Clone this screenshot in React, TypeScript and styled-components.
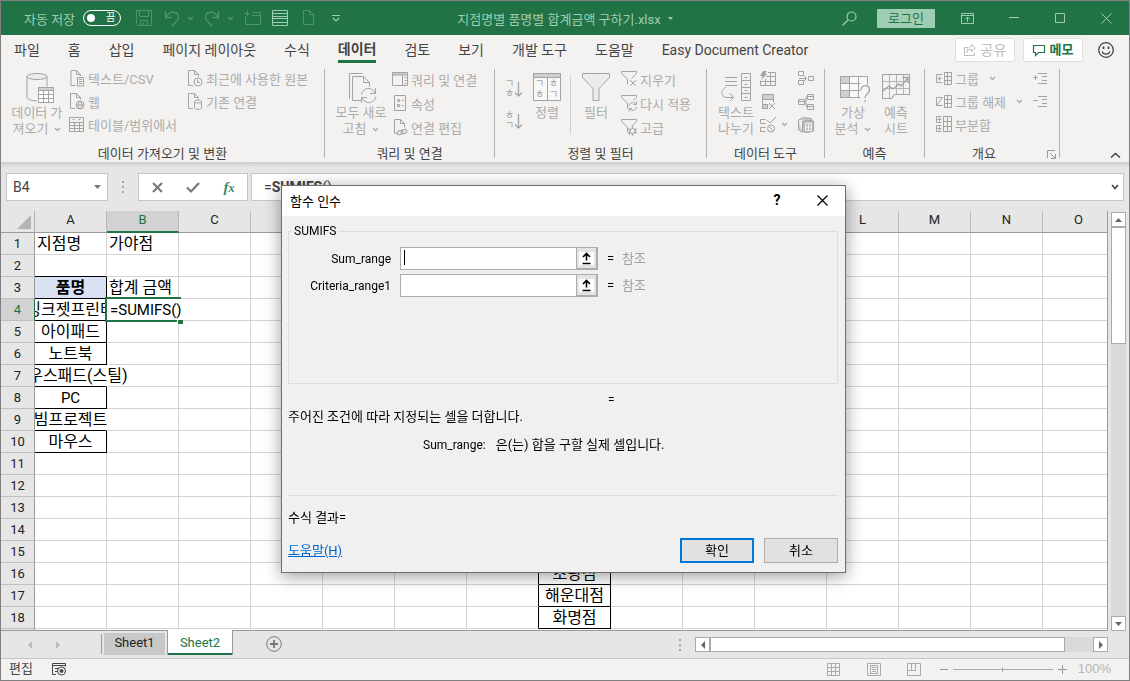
import React from 'react';
import styled, { createGlobalStyle, css } from 'styled-components';

const GREEN = '#217346';
const MINT = '#9fcdb3';
const DIM = '#4f9470';
const GREY = '#a3a3a3';

const GlobalStyle = createGlobalStyle`
  *, *::before, *::after { box-sizing: border-box; }
  body { margin: 0; }
  body, button, input {
    font-family: Roboto, 'Noto Sans CJK KR', sans-serif;
    font-size: 13px;
  }
  button { margin: 0; padding: 0; border: 0; background: none; color: inherit; }
`;

/* ---------- shared ---------- */

const Svg = styled.svg`
  display: block;
  flex: none;
  overflow: visible;
  fill: none;
  stroke: currentColor;
  stroke-width: 1;
`;

type IcoProps = { w: number; h: number; x?: number; children: React.ReactNode };
const Ico = ({ w, h, x = 0, children }: IcoProps) => (
  <Svg width={w} height={h} viewBox={`${-x} 0 ${w} ${h}`} aria-hidden="true">
    {children}
  </Svg>
);

const Chevron = () => (
  <Ico w={7} h={5}>
    <path d="M1 1l2.5 2.5L6 1" strokeWidth="1.3" />
  </Ico>
);

const Window = styled.div`
  position: relative;
  display: flex;
  flex-direction: column;
  height: 100vh;
  overflow: hidden;
  border: 1px solid #808080;
  background: #e6e6e6;
  color: #444;
`;

/* ---------- title bar ---------- */

const TitleBar = styled.header`
  display: grid;
  grid-template-columns: 1fr auto 1fr;
  align-items: center;
  flex: none;
  height: 34px;
  background: ${GREEN};
  color: ${MINT};
`;

const QuickAccess = styled.div`
  display: flex;
  align-items: center;
  gap: 4px;
  padding-left: 23px;
`;

const AutoSave = styled.label`
  display: flex;
  align-items: center;
  gap: 8px;
  margin-right: 7px;
  white-space: nowrap;
`;

const Toggle = styled.span`
  display: flex;
  align-items: center;
  justify-content: space-between;
  width: 38px;
  height: 16px;
  padding: 0 5px 0 3px;
  border: 1px solid #fff;
  border-radius: 8px;
  color: #fff;
  font-size: 10px;
  line-height: 14px;

  &::before {
    content: '';
    width: 8px;
    height: 8px;
    border-radius: 50%;
    background: #fff;
  }
`;

const ToggleInput = styled.input`
  position: absolute;
  opacity: 0;
  pointer-events: none;
`;

const Split = styled.div`
  display: flex;
`;

const QuickButton = styled.button<{ $narrow?: boolean; $lit?: boolean }>`
  display: flex;
  align-items: center;
  justify-content: center;
  width: ${p => (p.$narrow ? 12 : 24)}px;
  height: 24px;
  color: ${p => (p.$lit ? MINT : DIM)};
`;

const FileName = styled.button`
  display: flex;
  align-items: center;
  gap: 7px;
  color: ${MINT};
`;

const TitleRight = styled.div`
  display: flex;
  align-items: center;
  justify-content: flex-end;
`;

const Login = styled.button`
  width: 58px;
  height: 19px;
  margin: 0 10px 0 16px;
  border-radius: 1px;
  background: ${MINT};
  color: ${GREEN};
  line-height: 17px;
`;

const CaptionButton = styled.button`
  display: flex;
  align-items: center;
  justify-content: center;
  width: 46px;
  height: 34px;
`;

/* ---------- ribbon tabs ---------- */

const TabRow = styled.nav`
  display: flex;
  align-items: center;
  flex: none;
  height: 30px;
  padding: 0 15px 0 13px;
  background: #f3f2f1;
`;

const TabList = styled.div`
  display: flex;
  flex: 1;
  gap: 28px;
`;

const Tab = styled.button<{ $active?: boolean }>`
  height: 30px;
  padding-top: 1px;
  color: #444;
  font-size: 14px;
  line-height: 26px;
  white-space: nowrap;
  border-bottom: 2px solid #f3f2f1;
  ${p =>
    p.$active &&
    css`
      height: 26px;
      margin-top: 2px;
      line-height: 22px;
      border-bottom: 3px solid ${GREEN};
      font-weight: 700;
    `}
`;

const PillButton = styled.button<{ $strong?: boolean }>`
  display: flex;
  align-items: center;
  justify-content: center;
  gap: 5px;
  width: 60px;
  height: 24px;
  margin-right: 8px;
  border: 1px solid #e1dfdd;
  border-radius: 2px;
  background: #fff;
  color: ${p => (p.$strong ? GREEN : '#bdbdbd')};
  font-size: ${p => (p.$strong ? 13 : 14)}px;
  font-weight: ${p => (p.$strong ? 700 : 400)};
  line-height: 20px;
`;

const SmileButton = styled.button`
  margin-left: 7px;
  color: #444;
`;

/* ---------- ribbon ---------- */

const Ribbon = styled.section`
  display: flex;
  flex: none;
  height: 97px;
  background: #f3f2f1;
  color: #ababab;
`;

const Group = styled.div<{ $w: number }>`
  display: flex;
  flex-direction: column;
  flex: none;
  width: ${p => p.$w}px;
`;

const GroupBody = styled.div<{ $pad: number; $gap?: number }>`
  display: flex;
  align-items: flex-start;
  flex: 1;
  gap: ${p => p.$gap ?? 8}px;
  padding-left: ${p => p.$pad}px;
`;

const GroupFooter = styled.div`
  display: flex;
  align-items: center;
  justify-content: center;
  height: 18px;
  padding-top: 2px;
  color: #444;
  line-height: 16px;
`;

const Launcher = styled.button`
  margin-right: 3px;
  color: #999;
`;

const FooterLabel = styled.span`
  flex: 1;
  padding-right: 4px;
  text-align: center;
`;

const Divider = styled.div<{ $light?: boolean }>`
  flex: none;
  width: 1px;
  margin: ${p => (p.$light ? '10px 0' : '4px 0')};
  align-self: stretch;
  background: ${p => (p.$light ? '#d2d0ce' : '#b5b3b1')};
`;

const BigButton = styled.button<{ $w: number }>`
  display: flex;
  flex-direction: column;
  align-items: center;
  flex: none;
  width: ${p => p.$w}px;
  padding-top: 8px;
  line-height: 16px;
  white-space: nowrap;
`;

const BigIcon = styled.span`
  height: 32px;
  color: ${GREY};
`;

const BigLine = styled.span`
  display: flex;
  align-items: center;
  gap: 6px;
`;

const Stack = styled.div<{ $w?: number }>`
  display: flex;
  flex-direction: column;
  flex: none;
  width: ${p => (p.$w ? `${p.$w}px` : 'auto')};
  padding-top: 2px;
`;

const SmallButton = styled.button<{ $h?: number }>`
  display: flex;
  align-items: center;
  gap: 3px;
  height: ${p => p.$h ?? 23}px;
  white-space: nowrap;
`;

const IconSlot = styled.span`
  display: flex;
  justify-content: center;
  width: 16px;
  color: ${GREY};
`;

const ChevronSlot = styled.span<{ $tight: boolean }>`
  margin-left: ${p => (p.$tight ? 2 : 7)}px;
`;

const SortStack = styled.div`
  display: flex;
  flex-direction: column;
  gap: 14px;
  width: 18px;
  padding-top: 15px;
  color: ${GREY};
`;

const RibbonEnd = styled.div`
  display: flex;
  align-items: flex-end;
  justify-content: flex-end;
  flex: 1;
  padding: 0 8px 4px 0;
  color: #444;
`;

/* ---------- formula bar ---------- */

const FormulaBar = styled.section`
  display: flex;
  flex: none;
  height: 49px;
  padding: 11px 5px 10px;
  background: linear-gradient(#cdcdcd, #e6e6e6 6px);
`;

const Field = styled.div`
  display: flex;
  align-items: center;
  height: 28px;
  border: 1px solid #c6c6c6;
  background: #fff;
`;

const NameField = styled(Field)`
  width: 102px;
  padding-right: 6px;
`;

const NameInput = styled.input`
  flex: 1;
  min-width: 0;
  padding: 0 0 0 6px;
  border: 0;
  outline: 0;
  background: none;
  color: #444;
  font-size: 14px;
`;

const Dots = styled.span`
  display: flex;
  justify-content: center;
  align-items: center;
  width: 30px;
  color: #a6a6a6;
`;

const FxField = styled(Field)`
  width: 110px;
  margin-right: 3px;
  color: #777;
`;

const FxButton = styled.button`
  display: flex;
  align-items: center;
  justify-content: center;
  flex: 1;
`;

const Fx = styled.span`
  color: #3a8a5f;
  font: italic 700 15px 'Liberation Serif', serif;

  small { font-size: 12px; }
`;

const FormulaField = styled(Field)`
  flex: 1;
  padding: 0 4px 0 12px;
  font-size: 14px;
`;

const FormulaText = styled.div`
  flex: 1;
  outline: 0;
`;

/* ---------- worksheet ---------- */

const SheetArea = styled.main`
  display: flex;
  flex: 1;
  min-height: 0;
`;

const SheetClip = styled.div`
  flex: 1;
  min-width: 0;
  overflow: hidden;
  border-right: 1px solid #9b9b9b;
  border-bottom: 1px solid #9b9b9b;
  background: #fff;
`;

const COLS = 26;
const ROWS = 40;

const Grid = styled.table`
  table-layout: fixed;
  width: ${34 + COLS * 72}px;
  border-collapse: separate;
  border-spacing: 0;
  color: #000;
`;

const headCell = css<{ $on?: boolean }>`
  height: 22px;
  background: ${p => (p.$on ? '#d2d2d2' : '#e6e6e6')};
  color: ${p => (p.$on ? GREEN : '#222')};
  font-size: 13px;
  font-weight: 400;
  text-align: center;
  vertical-align: top;
`;

const Corner = styled.th`
  width: 34px;
  height: 22px;
  padding: 0 3px 3px 0;
  border-right: 1px solid #b1b1b1;
  border-bottom: 1px solid #9b9b9b;
  background: #e6e6e6;
  color: #b4b4b4;
  vertical-align: bottom;

  svg { margin-left: auto; }
`;

const ColHead = styled.th<{ $on?: boolean }>`
  ${headCell}
  width: 72px;
  padding: 0;
  line-height: 18px;
  border-right: 1px solid #b9b9b9;
  border-bottom: ${p => (p.$on ? `2px solid ${GREEN}` : '1px solid #9b9b9b')};
`;

const RowHead = styled.th<{ $on?: boolean }>`
  ${headCell}
  position: sticky;
  left: 0;
  z-index: 2;
  padding: 1px 0 0;
  line-height: 20px;
  border-right: ${p => (p.$on ? `1px solid ${GREEN}` : '1px solid #9b9b9b')};
  border-bottom: 1px solid #c0c0c0;
`;

type CellStyle = {
  text?: string;
  align?: 'left' | 'center';
  spill?: boolean;
  right?: boolean;
  bottom?: boolean;
  head?: boolean;
  latin?: boolean;
};

const Cell = styled.td<{ $c: CellStyle }>`
  position: relative;
  height: 22px;
  padding: 0;
  border-right: 1px solid ${p => (p.$c.right ? '#000' : p.$c.spill ? '#fff' : '#d4d4d4')};
  border-bottom: 1px solid ${p => (p.$c.bottom ? '#000' : '#d4d4d4')};
  background: ${p => (p.$c.head ? '#d9e1f2' : 'transparent')};
`;

const CellText = styled.div<{ $c: CellStyle }>`
  display: flex;
  justify-content: ${p => (p.$c.align === 'center' ? 'center' : 'flex-start')};
  height: 21px;
  padding: 0 2px;
  overflow: ${p => (p.$c.spill ? 'visible' : 'hidden')};
  font-size: ${p => (p.$c.latin ? 15 : 16)}px;
  font-weight: ${p => (p.$c.head ? 700 : 400)};
  line-height: 22px;
  white-space: nowrap;
`;

const CellEditor = styled.div`
  position: absolute;
  z-index: 1;
  top: -2px;
  left: -2px;
  width: 76px;
  height: 25px;
  padding-left: 3px;
  border: 2px solid ${GREEN};
  border-right: 0;
  background: #fff;
  font-size: 15px;
  line-height: 22px;
  white-space: nowrap;

  &::after {
    content: '';
    position: absolute;
    right: -2px;
    bottom: -4px;
    width: 6px;
    height: 5px;
    border: solid #fff;
    border-width: 1px 0 0 1px;
    background: ${GREEN};
  }
`;

const cells: Record<string, CellStyle> = {
  A1: { text: '지점명' },
  B1: { text: '가야점' },
  A2: { bottom: true },
  A3: { text: '품명', align: 'center', head: true, right: true, bottom: true },
  B3: { text: '합계 금액' },
  A4: { text: '잉크젯프린터', align: 'center', right: true, bottom: true },
  A5: { text: '아이패드', align: 'center', right: true, bottom: true },
  A6: { text: '노트북', align: 'center', right: true, bottom: true },
  A7: { text: '마우스패드(스틸)', align: 'center', spill: true, bottom: true },
  A8: { text: 'PC', align: 'center', latin: true, right: true, bottom: true },
  A9: { text: '빔프로젝트', align: 'center', spill: true, bottom: true },
  A10: { text: '마우스', align: 'center', right: true, bottom: true },
  H15: { right: true, bottom: true },
  G16: { right: true },
  H16: { text: '초량점', align: 'center', right: true, bottom: true },
  G17: { right: true },
  H17: { text: '해운대점', align: 'center', right: true, bottom: true },
  G18: { right: true },
  H18: { text: '화명점', align: 'center', right: true, bottom: true },
};

const columns = Array.from({ length: COLS }, (_, i) => String.fromCharCode(65 + i));
const rows = Array.from({ length: ROWS }, (_, i) => i + 1);

const VScroll = styled.div`
  display: flex;
  flex-direction: column;
  flex: none;
  width: 21px;
  padding: 1px 3px 0;
`;

const ScrollTrack = styled.div<{ $row?: boolean }>`
  display: flex;
  flex: 1;
  flex-direction: ${p => (p.$row ? 'row' : 'column')};
  background: #dadada;
`;

const ScrollButton = styled.button`
  display: flex;
  align-items: center;
  justify-content: center;
  flex: none;
  width: 15px;
  height: 15px;
  border: 1px solid #ababab;
  background: #fff;
  color: #666;

  svg { fill: currentColor; stroke: none; }
`;

const VThumb = styled.div`
  height: 30%;
  border: 1px solid #ababab;
  background: #fff;
`;

const HThumb = styled.div`
  width: 355px;
  border: 1px solid #ababab;
  background: #fff;
`;

/* ---------- sheet tabs and status bar ---------- */

const SheetBar = styled.footer`
  display: flex;
  flex: none;
  height: 28px;
  border-bottom: 1px solid #c6c6c6;
`;

const SheetNav = styled.div`
  display: flex;
  align-items: center;
  gap: 24px;
  width: 100px;
  padding-left: 27px;
  color: #b9b9b9;

  svg { fill: currentColor; stroke: none; }
`;

const SheetTab = styled.button<{ $active?: boolean }>`
  height: 22px;
  margin: 2px 2px 0;
  width: 61px;
  padding-bottom: 2px;
  background: #c8c8c8;
  color: #222;
  line-height: 18px;
  ${p =>
    p.$active &&
    css`
      width: 66px;
      height: 25px;
      margin: -1px 0 0;
      padding: 0;
      border: 1px solid #9b9b9b;
      border-width: 0 1px;
      background: #fff;
      color: ${GREEN};
      line-height: 25px;
      box-shadow: inset 0 -2px ${GREEN};
    `}
`;

const TabRule = styled.span`
  width: 1px;
  height: 20px;
  margin-top: 3px;
  background: #9b9b9b;
`;

const AddSheet = styled.button`
  display: flex;
  align-items: center;
  height: 26px;
  margin-left: 33px;
  color: #777;
`;

const BarSpace = styled.div`
  flex: 1;
`;

const HScroll = styled.div`
  display: flex;
  width: 413px;
  height: 15px;
  margin: 6px 21px 0 0;
`;

const StatusBar = styled.footer`
  display: flex;
  align-items: center;
  flex: none;
  height: 21px;
  padding: 0 18px 1px 8px;
  background: #f3f2f1;
  color: #444;
  line-height: 18px;
`;

const MacroButton = styled.button`
  margin-left: 19px;
`;

const ViewButtons = styled.div`
  display: flex;
  gap: 26px;
  margin-right: 19px;
  color: #aaa;
`;

const ZoomButton = styled.button`
  color: #999;
`;

const ZoomRange = styled.input`
  width: 100px;
  height: 14px;
  margin: 0 5px;
  appearance: none;
  background: linear-gradient(#aaa, #aaa) center / 100% 1px no-repeat;

  &::-webkit-slider-thumb {
    appearance: none;
    width: 1px;
    height: 5px;
    background: #aaa;
  }
`;

const ZoomLevel = styled.output`
  margin-left: 11px;
  color: #b5b5b5;
  font-family: 'Liberation Sans', sans-serif;
`;

/* ---------- function arguments dialog ---------- */

const Dialog = styled.form`
  position: absolute;
  z-index: 5;
  top: 184px;
  left: 280px;
  width: 565px;
  border: 1px solid #6e6e6e;
  background: #f0f0f0;
  box-shadow: 0 3px 16px rgba(0, 0, 0, 0.4);
  color: #000;
`;

const DialogTitle = styled.div`
  display: flex;
  align-items: center;
  height: 30px;
  padding: 0 16px 2px 8px;
  background: #fff;
`;

const DialogName = styled.h1`
  flex: 1;
  margin: 0;
  font-size: 13px;
  font-weight: 400;
`;

const DialogTool = styled.button`
  display: flex;
  align-items: center;
  justify-content: center;
  width: 14px;
  margin-left: 31px;
  font-size: 14px;
  font-weight: 700;
`;

const DialogBody = styled.div`
  padding: 7px 7px 9px 6px;
  line-height: 18px;
`;

const ArgGroup = styled.fieldset`
  height: 161px;
  margin: 0;
  padding: 8px 0 0;
  border: 1px solid #dcdcdc;
`;

const ArgLegend = styled.legend`
  margin-left: 3px;
  padding: 0 2px;
  font-size: 12px;
  line-height: 16px;
`;

const ArgRow = styled.div`
  display: grid;
  grid-template-columns: 102px 198px 6px auto;
  align-items: center;
  column-gap: 9px;
  height: 23px;
  margin-bottom: 4px;
`;

const ArgLabel = styled.label`
  font-size: 12px;
  text-align: right;
`;

const ArgBox = styled.div`
  position: relative;
  display: flex;
  height: 23px;
  border: 1px solid #ababb0;
  background: #fff;
`;

const ArgInput = styled.input`
  flex: 1;
  min-width: 0;
  padding: 0 4px;
  border: 0;
  outline: 0;
  background: none;
  caret-color: transparent;
`;

const Caret = styled.span`
  position: absolute;
  top: 2px;
  left: 3px;
  width: 1px;
  height: 15px;
  background: #000;
`;

const PickButton = styled.button`
  display: flex;
  align-items: center;
  justify-content: center;
  width: 21px;
  border: 1px solid #ababb0;
  border-width: 0 1px 1px;
  background: #e4e4e4;

  svg { background: #fff; }
`;

const Ref = styled.span`
  color: #a0a0a0;
`;

const ResultRow = styled.div`
  height: 16px;
  margin-top: 8px;
  padding-left: 320px;
  font-size: 12px;
  line-height: 16px;
`;

const Line = styled.p`
  margin: 0;
  line-height: 18px;
`;

const ArgHelp = styled.dl`
  display: flex;
  gap: 10px;
  margin: 10px 0 41px 135px;

  dt { font-size: 12px; }
  dd { margin: 0; }
`;

const Rule = styled.hr`
  height: 1px;
  margin: 0 0 13px;
  border: 0;
  background: #dcdcdc;
`;

const DialogFooter = styled.div`
  display: flex;
  align-items: center;
  gap: 10px;
  margin-top: 11px;
`;

const HelpLink = styled.a`
  margin-right: auto;
  color: #0066cc;
`;

const DialogButton = styled.button<{ $primary?: boolean }>`
  width: 74px;
  height: 25px;
  border: ${p => (p.$primary ? '2px solid #0078d7' : '1px solid #adadad')};
  background: #e1e1e1;
  color: #000;
  line-height: 20px;
`;

/* ---------- ribbon drawings ---------- */

const page = 'M1.5 .5h6l4 4v10h-10zM7.5 .5v4h4';

const TextFileIcon = () => (
  <Ico w={16} h={17}>
    <path d="M6.500 15.500h-4.500v-15h5.500l4 4v1.500M7.500 .5v4h4" />
    <path d="M8.500 7.500h6v8.500h-6zM10 9.500h3M10 11.500h3M10 13.500h3" />
  </Ico>
);
const WebIcon = () => (
  <Ico w={16} h={17}>
    <path d="M6 15.500h-4.500v-15h6l4 4v2M7.500 .5v4h4" />
    <circle cx="11" cy="12" r="4" />
    <path d="M7 12h8M11 8c-2.500 2.500-2.500 5.500 0 8M11 8c2.500 2.500 2.500 5.500 0 8" />
  </Ico>
);
const TableIcon = () => (
  <Ico w={16} h={15}>
    <path d="M.5 .5h14v14h-14zM.5 5.500h14M.5 8.500h14M.5 11.500h14M5.500 5.500v9M10.500 5.500v9" />
    <path d="M3 2l1.500 1.500L6 2zM9 2l1.500 1.500L12 2z" fill="currentColor" stroke="none" />
  </Ico>
);
const RecentIcon = () => (
  <Ico w={16} h={17}>
    <path d="M6 15.500h-4.500v-15h6l4 4v2M7.500 .5v4h4" />
    <circle cx="11" cy="12" r="4" />
    <path d="M10.500 9.500v3h2.500" />
  </Ico>
);
const ExistingIcon = () => (
  <Ico w={16} h={17}>
    <path d="M6 15.500h-4.500v-15h6l4 4v1M7.500 .5v4h4" />
    <ellipse cx="11" cy="8.500" rx="3.500" ry="1.500" />
    <path d="M7.500 8.500v6c0 2.500 7 2.500 7 0v-6" />
  </Ico>
);
const DatabaseIcon = () => (
  <Ico w={34} h={31} x={6}>
    <ellipse cx="11" cy="3.500" rx="10" ry="3" fill="#ececec" />
    <path d="M1 3.500v21c0 2 5 3.300 10 3.500M21 3.500v10" />
    <path d="M12.500 14.500h15v15h-15z" fill="#fff" />
    <path d="M12.500 14.500h15v3h-15z" fill="#d0d0d0" />
    <path d="M12.500 21.500h15M12.500 25.500h15M17.500 17.500v12M22.500 17.500v12" />
  </Ico>
);
const RefreshAllIcon = () => (
  <Ico w={32} h={31} x={4}>
    <path d="M.5 26v-25.500h13" />
    <path d="M12 27.500h-8.500v-24h11l6 6v4M14.500 3.500v6h6" />
    <path d="M12.500 21.500c1-7.500 11.500-8 13.500-1.500M26.500 15v5.500h-5.500" />
    <path d="M27 23.500c-1 7.500-12 8-14 1.500M12.500 30v-5.500h5.500" />
  </Ico>
);
const QueriesIcon = () => (
  <Ico w={16} h={14}>
    <path d="M.5 .5h15v13h-15zM10.500 3v10.500M12.500 5.500h2M12.500 8.500h2M12.500 11.500h2" />
    <path d="M.5 .5h15v2.500h-15z" fill="#cfcfcf" />
  </Ico>
);
const PropertiesIcon = () => (
  <Ico w={12} h={16}>
    <path d="M.5 .5h11v15h-11zM3.500 4.500h2v2h-2zM3.500 9.500h2v2h-2zM7.500 5.500h2M7.500 10.500h2" />
  </Ico>
);
const EditLinksIcon = () => (
  <Ico w={14} h={17}>
    <path d="M4 14.500h-2.500v-14h6l4 4v4M7.500 .5v4h4" />
    <ellipse cx="7" cy="13.500" rx="3" ry="2" transform="rotate(-25 7 13.500)" />
    <ellipse cx="11" cy="12.500" rx="3" ry="2" transform="rotate(-25 11 12.500)" />
  </Ico>
);
const JamoText = styled.text`
  fill: currentColor;
  stroke: none;
  font: 10px 'Noto Sans CJK KR', sans-serif;
`;
const SortIcon = ({ a, b }: { a: string; b: string }) => (
  <Ico w={18} h={18}>
    <JamoText x="-1" y="7">{a}</JamoText>
    <JamoText x="-1" y="17">{b}</JamoText>
    <path d="M12.500 2v14M9 12.500l3.500 3.500 3.500-3.500" strokeWidth="1.300" />
  </Ico>
);
const SortDialogIcon = () => (
  <Ico w={28} h={28}>
    <path d="M.5 .5h27v27h-27z" fill="#f8f8f8" />
    <path d="M.5 .5h27v4h-27z" fill="#cfcfcf" />
    <path d="M14.500 4.500v23" />
    <JamoText x="2" y="14">ㄱ</JamoText>
    <JamoText x="2" y="25">ㅎ</JamoText>
    <JamoText x="16" y="14">ㅎ</JamoText>
    <JamoText x="16" y="25">ㄱ</JamoText>
  </Ico>
);
const FilterIcon = () => (
  <Ico w={28} h={28}>
    <path d="M.5 .5h27v4l-10.500 11v12h-6v-12l-10.500-11z" fill="#ebebeb" />
  </Ico>
);
const funnel = 'M8.500 16v-2l-2-1v-5l-6-5.500v-2h15v2l-5 5';
const ClearIcon = () => (
  <Ico w={16} h={17}>
    <path d="M6.500 13.500v-5.500l-6-5.500v-2h15v2l-5 5" />
    <path d="M9 9l6 6M15 9l-6 6" />
  </Ico>
);
const ReapplyIcon = () => (
  <Ico w={16} h={17}>
    <path d="M6.500 13.500v-5.500l-6-5.500v-2h15v2l-3 3" />
    <path d="M8 11c.5-4 6-4.500 7-1.500M15.500 6.500v3h-3M15.500 12c-.5 4-6 4.500-7 1.500M8 16.500v-3h3" />
  </Ico>
);
const AdvancedIcon = () => (
  <Ico w={16} h={17}>
    <path d={funnel} />
    <circle cx="11.500" cy="12" r="2.500" />
    <path d="M11.500 7.500v2M11.500 14.500v2M7.500 10l2 1M13.500 13l2 1M7.500 14l2-1M13.500 11l2-1" strokeWidth="1.500" />
  </Ico>
);
const TextColumnsIcon = () => (
  <Ico w={30} h={28}>
    <path d="M4 4.500h12M4 8.500h12M4 12.500h12" />
    <path d="M5 14c-5 3-6 9 0 10.500h7M8.500 20l4 4.500-4 4" />
    <path d="M20.500 .5h9v27h-9zM20.500 7.500h9M20.500 14.500h9M20.500 20.500h9M23.500 4.500h3M23.500 11.500h3M23.500 17.500h3M23.500 24.500h3" />
  </Ico>
);
const FlashFillIcon = () => (
  <Ico w={16} h={16}>
    <path d="M8 1.500h7.500v13h-15v-5M.5 10.500h15M5.500 8v6.500M10.500 1.500v13M6 5.500h9.500" />
    <path d="M3 0h4l-2 3h2l-6 6 1.500-4H0z" fill="currentColor" stroke="none" />
  </Ico>
);
const DuplicatesIcon = () => (
  <Ico w={16} h={16}>
    <path d="M2.500 .5h11v5h-11z" fill="#cfcfcf" />
    <path d="M13.500 5.500v3M2.500 5.500v5h6" />
    <path d="M2.500 10.500h5v4h-5z" fill="#cfcfcf" />
    <path d="M9 9l6 6M15 9l-6 6" />
  </Ico>
);
const ValidationIcon = () => (
  <Ico w={16} h={16}>
    <path d="M5.500 2.500h-5v4h5M5.500 10.500h-5v4h5" />
    <path d="M7 3l3 3 6-6" />
    <circle cx="11" cy="11.500" r="3.500" />
    <path d="M8.500 9l5 5" />
  </Ico>
);
const ConsolidateIcon = () => (
  <Ico w={16} h={15}>
    <path d="M.5 .5h5v4h-5zM.5 9.500h5v4h-5zM10.500 5.500h5v4h-5zM1 7.500h7M6 5l2.500 2.500-2.500 2.500" />
  </Ico>
);
const RelationsIcon = () => (
  <Ico w={16} h={16}>
    <path d="M.5 5.500h6v5h-6zM9.500 .5h6v5h-6zM9.500 10.500h6v5h-6zM6.500 7.500h1.500v-4.500h1.500M8 7.500v5h1.500M.5 7.500h6M9.500 2.500h6M9.500 12.500h6" />
  </Ico>
);
const ModelIcon = () => (
  <Ico w={16} h={16}>
    <path d="M.5 3l5-2.500 8 1v2.500M.5 3v10l4 2.500" fill="#cfcfcf" />
    <path d="M4.500 4.500l3-1.500 8 1v10l-6 1.500-5-1z" fill="#bdbdbd" />
    <path d="M7.500 6.500h6v7h-6zM10.500 6.500v7M7.500 10h6" stroke="#f3f2f1" />
  </Ico>
);
const WhatIfIcon = () => (
  <Ico w={34} h={28} x={4}>
    <path d="M.5 3.500h27v21h-27z" fill="#f8f8f8" stroke="none" />
    <path d="M.5 3.500h9v7h-9zM.5 17.500h9v7h-9z" fill="#cfcfcf" />
    <path d="M20 24.500h-19.500v-21h27v8M.5 10.500h20M.5 17.500h20M9.500 3.500v21M18.500 3.500v21" />
    <path d="M21 17c0-6 9-5.500 8.500 0 0 3.500-4.500 3.500-4.500 8M25 27v2" strokeWidth="1.300" />
  </Ico>
);
const ForecastIcon = () => (
  <Ico w={28} h={28}>
    <path d="M.5 1.500h27v20h-15l-3 4h-9zM.5 8.500h27M.5 15.500h27M7.500 1.500v24M14.500 1.500v20M21.500 1.500v20" stroke="#b4b4b4" />
    <path d="M27.500 21.500v-20h-27v24h9l3-4z" />
    <path d="M1 18l6-5 4 3 6-5 2 2 7-8M20.500 4.500h5.500v5.500" strokeWidth="1.300" />
  </Ico>
);
const GroupIcon = () => (
  <Ico w={16} h={14}>
    <path d="M6.500 2.500h-6v8h6M1.500 6.500h4M3.500 4.500v4M8.500 .5h7v12h-7zM8.500 4.500h7M8.500 8.500h7M11.500 .5v12" />
  </Ico>
);
const UngroupIcon = () => (
  <Ico w={16} h={14}>
    <path d="M6.500 2.500h-6v8h6M.5 10.500l6-8M8.500 .5h7v12h-7zM8.500 4.500h7M8.500 8.500h7M11.500 .5v12" />
  </Ico>
);
const SubtotalIcon = () => (
  <Ico w={16} h={17}>
    <path d="M5.500 .5h-5v6h5M5.500 9.500h-5v6h5M1.500 3.500h4M3.500 1.500v4M1.500 12.500h4M3.500 10.500v4M7.500 .5h8v15h-8zM7.500 5.500h8M7.500 10.500h8M11.500 .5v15" />
  </Ico>
);
const DetailIcon = ({ plus }: { plus?: boolean }) => (
  <Ico w={16} h={12}>
    <path d="M5 .5h9M9 3.500h5M9 7.500h5M5 10.500h9" />
    <path d={plus ? 'M0 4.500h5M2.500 2v5' : 'M0 4.500h5'} />
  </Ico>
);

const Up = () => <Ico w={7} h={4}><path d="M0 4L3.500 0 7 4z" /></Ico>;
const Down = () => <Ico w={7} h={4}><path d="M0 0h7L3.500 4z" /></Ico>;
const Left = () => <Ico w={4} h={8}><path d="M4 0v8L0 4z" /></Ico>;
const Right = () => <Ico w={4} h={8}><path d="M0 0v8l4-4z" /></Ico>;
const DotsIcon = () => (
  <Ico w={2} h={12}>
    <path d="M0 0h2v2H0zM0 5h2v2H0zM0 10h2v2H0z" fill="currentColor" stroke="none" />
  </Ico>
);

/* ---------- parts ---------- */

const menuTabs = ['파일', '홈', '삽입', '페이지 레이아웃', '수식', '데이터', '검토', '보기', '개발 도구', '도움말', 'Easy Document Creator'];

type SmallProps = { icon: React.ReactNode; label?: string; h?: number; menu?: boolean };
const Small = ({ icon, label, h, menu }: SmallProps) => (
  <SmallButton type="button" $h={h}>
    <IconSlot>{icon}</IconSlot>
    {label}
    {menu && <ChevronSlot $tight={!label}><Chevron /></ChevronSlot>}
  </SmallButton>
);

type BigProps = { icon: React.ReactNode; w: number; lines: string[]; menu?: boolean };
const Big = ({ icon, w, lines, menu }: BigProps) => (
  <BigButton type="button" $w={w}>
    <BigIcon>{icon}</BigIcon>
    {lines.map((line, i) => (
      <BigLine key={line}>
        {line}
        {menu && i === lines.length - 1 && <Chevron />}
      </BigLine>
    ))}
  </BigButton>
);

const TitleArea = () => (
  <TitleBar>
    <QuickAccess>
      <AutoSave>
        자동 저장
        <ToggleInput type="checkbox" />
        <Toggle>끔</Toggle>
      </AutoSave>
      <QuickButton aria-label="저장">
        <Ico w={16} h={16}><path d="M.5 .5h15v15h-13l-2-2zM3.500 .5v6h9v-6M4.500 15.500v-5h7v5M7.500 15v-2.500" /></Ico>
      </QuickButton>
      <Split>
        <QuickButton aria-label="실행 취소">
          <Ico w={16} h={17}><path d="M1.500 1v6.500h6M1.500 7.500c5-8 13-6 13 0 0 3-3 5-7 8.500" strokeWidth="1.300" /></Ico>
        </QuickButton>
        <QuickButton $narrow aria-label="실행 취소 목록"><Chevron /></QuickButton>
      </Split>
      <Split>
        <QuickButton aria-label="다시 실행">
          <Ico w={16} h={17}><path d="M14.500 1v6.500h-6M14.500 7.500c-5-8-13-6-13 0 0 3 3 5 7 8.500" strokeWidth="1.300" /></Ico>
        </QuickButton>
        <QuickButton $narrow aria-label="다시 실행 목록"><Chevron /></QuickButton>
      </Split>
      <QuickButton aria-label="새 창">
        <Ico w={17} h={16}><path d="M8 2.500h8.500v12h-15v-8M8 5.500h8.500M0 3.500h6M3.500 .5v6" /></Ico>
      </QuickButton>
      <QuickButton $lit aria-label="표">
        <Ico w={16} h={16}><path d="M.5 .5h15v15h-15zM.5 3.500h15M.5 6.500h15M.5 8.500h15M.5 12.500h15" /></Ico>
      </QuickButton>
      <QuickButton aria-label="새로 만들기">
        <Ico w={13} h={16}><path d={page} /></Ico>
      </QuickButton>
      <QuickButton $lit aria-label="빠른 실행 도구 모음 사용자 지정">
        <Ico w={8} h={7}><path d="M0 .5h8M1 3l3 3 3-3" strokeWidth="1.200" /></Ico>
      </QuickButton>
    </QuickAccess>
    <FileName type="button">
      지점명별 품명별 합계금액 구하기.xlsx
      <Ico w={5} h={3}><path d="M0 0h5L2.500 3z" fill="currentColor" stroke="none" /></Ico>
    </FileName>
    <TitleRight>
      <QuickButton $lit aria-label="검색">
        <Ico w={15} h={15}>
          <circle cx="9.500" cy="5.500" r="4.500" strokeWidth="1.200" />
          <path d="M6 9l-5.500 5.500" strokeWidth="1.200" />
        </Ico>
      </QuickButton>
      <Login type="button">로그인</Login>
      <CaptionButton aria-label="리본 메뉴 표시 옵션">
        <Ico w={14} h={11}><path d="M.5 .5h12v10h-12zM.5 2.500h12M6.500 9v-5M4 6.500l2.500-2.500 2.500 2.500" /></Ico>
      </CaptionButton>
      <CaptionButton aria-label="최소화"><Ico w={10} h={2}><path d="M0 .5h10" /></Ico></CaptionButton>
      <CaptionButton aria-label="최대화"><Ico w={10} h={10}><path d="M.5 .5h9v9h-9z" /></Ico></CaptionButton>
      <CaptionButton aria-label="닫기"><Ico w={11} h={11}><path d="M.5 .5l10 10M10.500 .5l-10 10" /></Ico></CaptionButton>
    </TitleRight>
  </TitleBar>
);

const MenuRow = () => (
  <TabRow>
    <TabList>
      {menuTabs.map(t => <Tab key={t} type="button" $active={t === '데이터'}>{t}</Tab>)}
    </TabList>
    <PillButton type="button">
      <Ico w={12} h={12}><path d="M4 3.500h-3.500v8h10v-3M7.500 .5l4 3.500-4 3.500v-2c-3 0-4 1-4.500 3 0-3 1-5.500 4.500-6z" /></Ico>
      공유
    </PillButton>
    <PillButton type="button" $strong>
      <Ico w={12} h={11}><path d="M.5 .5h11v7h-6l-3 3v-3h-2z" strokeWidth="1.200" /></Ico>
      메모
    </PillButton>
    <SmileButton type="button" aria-label="의견 보내기">
      <Ico w={16} h={16}>
        <circle cx="8" cy="8" r="7.300" strokeWidth="1.300" />
        <path d="M4 9.500c1.500 3.500 6.500 3.500 8 0" strokeWidth="1.300" />
        <path d="M5.500 4.500v2.500M10.500 4.500v2.500" strokeWidth="1.800" />
      </Ico>
    </SmileButton>
  </TabRow>
);

const RibbonArea = () => (
  <Ribbon>
    <Group $w={323}>
      <GroupBody $pad={9} $gap={5}>
        <Big icon={<DatabaseIcon />} w={54} lines={['데이터 가', '져오기']} menu />
        <Stack $w={113}>
          <Small icon={<TextFileIcon />} label="텍스트/CSV" />
          <Small icon={<WebIcon />} label="웹" />
          <Small icon={<TableIcon />} label="테이블/범위에서" />
        </Stack>
        <Stack>
          <Small icon={<RecentIcon />} label="최근에 사용한 원본" />
          <Small icon={<ExistingIcon />} label="기존 연결" />
        </Stack>
      </GroupBody>
      <GroupFooter>데이터 가져오기 및 변환</GroupFooter>
    </Group>
    <Divider />
    <Group $w={169}>
      <GroupBody $pad={9} $gap={4}>
        <Big icon={<RefreshAllIcon />} w={54} lines={['모두 새로', '고침']} menu />
        <Stack>
          <Small h={24} icon={<QueriesIcon />} label="쿼리 및 연결" />
          <Small h={24} icon={<PropertiesIcon />} label="속성" />
          <Small h={24} icon={<EditLinksIcon />} label="연결 편집" />
        </Stack>
      </GroupBody>
      <GroupFooter>쿼리 및 연결</GroupFooter>
    </Group>
    <Divider />
    <Group $w={211}>
      <GroupBody $pad={11} $gap={6}>
        <SortStack>
          <SortIcon a="ㄱ" b="ㅎ" />
          <SortIcon a="ㅎ" b="ㄱ" />
        </SortStack>
        <Big icon={<SortDialogIcon />} w={34} lines={['정렬']} />
        <Divider $light />
        <Big icon={<FilterIcon />} w={38} lines={['필터']} />
        <Stack>
          <Small h={24} icon={<ClearIcon />} label="지우기" />
          <Small h={24} icon={<ReapplyIcon />} label="다시 적용" />
          <Small h={24} icon={<AdvancedIcon />} label="고급" />
        </Stack>
      </GroupBody>
      <GroupFooter>정렬 및 필터</GroupFooter>
    </Group>
    <Divider />
    <Group $w={117}>
      <GroupBody $pad={9} $gap={4}>
        <Big icon={<TextColumnsIcon />} w={40} lines={['텍스트', '나누기']} />
        <Stack $w={34}>
          <Small icon={<FlashFillIcon />} />
          <Small icon={<DuplicatesIcon />} />
          <Small icon={<ValidationIcon />} menu />
        </Stack>
        <Stack>
          <Small icon={<ConsolidateIcon />} />
          <Small icon={<RelationsIcon />} />
          <Small icon={<ModelIcon />} />
        </Stack>
      </GroupBody>
      <GroupFooter>데이터 도구</GroupFooter>
    </Group>
    <Divider />
    <Group $w={99}>
      <GroupBody $pad={8} $gap={3}>
        <Big icon={<WhatIfIcon />} w={40} lines={['가상', '분석']} menu />
        <Big icon={<ForecastIcon />} w={40} lines={['예측', '시트']} />
      </GroupBody>
      <GroupFooter>예측</GroupFooter>
    </Group>
    <Divider />
    <Group $w={134}>
      <GroupBody $pad={11} $gap={8}>
        <Stack $w={89}>
          <Small icon={<GroupIcon />} label="그룹" menu />
          <Small icon={<UngroupIcon />} label="그룹 해제" menu />
          <Small icon={<SubtotalIcon />} label="부분합" />
        </Stack>
        <Stack>
          <Small icon={<DetailIcon plus />} />
          <Small icon={<DetailIcon />} />
        </Stack>
      </GroupBody>
      <GroupFooter>
        <FooterLabel>개요</FooterLabel>
        <Launcher type="button" aria-label="개요 설정">
          <Ico w={9} h={9}><path d="M.5 8v-7.500h7.500M3 3l5 5M8.500 4v4.500h-4.500" /></Ico>
        </Launcher>
      </GroupFooter>
    </Group>
    <Divider />
    <RibbonEnd>
      <button type="button" aria-label="리본 메뉴 축소">
        <Ico w={11} h={6}><path d="M1 5.500l4.500-4 4.500 4" strokeWidth="1.500" /></Ico>
      </button>
    </RibbonEnd>
  </Ribbon>
);

const FormulaArea = () => (
  <FormulaBar>
    <NameField>
      <NameInput aria-label="이름 상자" defaultValue="B4" />
      <Ico w={7} h={4}><path d="M0 0h7L3.500 4z" fill="#777" stroke="none" /></Ico>
    </NameField>
    <Dots><DotsIcon /></Dots>
    <FxField>
      <FxButton type="button" aria-label="취소"><Ico w={11} h={11}><path d="M1 1l9 9M10 1l-9 9" strokeWidth="2" /></Ico></FxButton>
      <FxButton type="button" aria-label="입력"><Ico w={14} h={11}><path d="M1 5.500l4 4L13 1" strokeWidth="2.200" /></Ico></FxButton>
      <FxButton type="button" aria-label="함수 삽입"><Fx>f<small>x</small></Fx></FxButton>
    </FxField>
    <FormulaField>
      <FormulaText role="textbox" aria-label="수식 입력줄">=<b>SUMIFS</b>()</FormulaText>
      <Ico w={8} h={6}><path d="M1 1l3 3.500L7 1" strokeWidth="1.600" /></Ico>
    </FormulaField>
  </FormulaBar>
);

const Worksheet = () => (
  <SheetArea>
    <SheetClip>
      <Grid>
        <thead>
          <tr>
            <Corner aria-label="모두 선택"><Ico w={14} h={14}><path d="M14 0v14H0z" fill="currentColor" stroke="none" /></Ico></Corner>
            {columns.map(c => <ColHead key={c} scope="col" $on={c === 'B'}>{c}</ColHead>)}
          </tr>
        </thead>
        <tbody>
          {rows.map(r => (
            <tr key={r}>
              <RowHead scope="row" $on={r === 4}>{r}</RowHead>
              {columns.map(c => {
                const cell = cells[`${c}${r}`] ?? {};
                return (
                  <Cell key={c} $c={cell}>
                    {cell.text && <CellText $c={cell}>{cell.text}</CellText>}
                    {c === 'B' && r === 4 && <CellEditor>=SUMIFS()</CellEditor>}
                  </Cell>
                );
              })}
            </tr>
          ))}
        </tbody>
      </Grid>
    </SheetClip>
    <VScroll>
      <ScrollButton type="button" aria-label="위로"><Up /></ScrollButton>
      <ScrollTrack><VThumb /></ScrollTrack>
      <ScrollButton type="button" aria-label="아래로"><Down /></ScrollButton>
    </VScroll>
  </SheetArea>
);

const Bottom = () => (
  <>
    <SheetBar>
      <SheetNav><Left /><Right /></SheetNav>
      <TabRule />
      <SheetTab type="button">Sheet1</SheetTab>
      <SheetTab type="button" $active>Sheet2</SheetTab>
      <AddSheet type="button" aria-label="새 시트">
        <Ico w={16} h={16}>
          <circle cx="8" cy="8" r="7.300" />
          <path d="M8 4v8M4 8h8" strokeWidth="1.800" />
        </Ico>
      </AddSheet>
      <BarSpace />
      <Dots><DotsIcon /></Dots>
      <HScroll>
        <ScrollButton type="button" aria-label="왼쪽으로"><Left /></ScrollButton>
        <ScrollTrack $row><HThumb /></ScrollTrack>
        <ScrollButton type="button" aria-label="오른쪽으로"><Right /></ScrollButton>
      </HScroll>
    </SheetBar>
    <StatusBar>
      편집
      <MacroButton type="button" aria-label="매크로 기록">
        <Ico w={15} h={14}>
          <path d="M4 12.500h-3.500v-11h13v3M.5 3.500h13M3 6.500h4M3 9.500h2" />
          <circle cx="9.500" cy="9" r="4" />
          <circle cx="9.500" cy="9" r="1.500" fill="currentColor" />
        </Ico>
      </MacroButton>
      <BarSpace />
      <ViewButtons>
        <button type="button" aria-label="기본"><Ico w={14} h={13}><path d="M.5 .5h12v12h-12zM.5 4.500h12M.5 8.500h12M4.500 .5v12M8.500 .5v12" /></Ico></button>
        <button type="button" aria-label="페이지 레이아웃"><Ico w={14} h={13}><path d="M.5 .5h13v12h-13zM3.500 2.500h7v8h-7zM5 4.500h4M5 6.500h4M5 8.500h4" /></Ico></button>
        <button type="button" aria-label="페이지 나누기 미리 보기"><Ico w={14} h={13}><path d="M.5 .5h13v12h-13zM.5 7.500h8v-7M4.500 .5v7" /></Ico></button>
      </ViewButtons>
      <ZoomButton type="button" aria-label="축소"><Ico w={8} h={9}><path d="M0 4.500h8" /></Ico></ZoomButton>
      <ZoomRange type="range" aria-label="확대/축소" min={0} max={100} defaultValue={50} />
      <ZoomButton type="button" aria-label="확대"><Ico w={9} h={9}><path d="M0 4.500h9M4.500 0v9" /></Ico></ZoomButton>
      <ZoomLevel>100%</ZoomLevel>
    </StatusBar>
  </>
);

const Argument = ({ name, active }: { name: string; active?: boolean }) => (
  <ArgRow>
    <ArgLabel htmlFor={name}>{name}</ArgLabel>
    <ArgBox>
      <ArgInput id={name} type="text" />
      {active && <Caret />}
      <PickButton type="button" aria-label={`${name} 범위 선택`}>
        <Ico w={15} h={13}><path d="M7.500 8.500V2M4 5l3.500-3.500L11 5M3.500 11.500h8" strokeWidth="1.600" /></Ico>
      </PickButton>
    </ArgBox>
    <span>=</span>
    <Ref>참조</Ref>
  </ArgRow>
);

const ArgumentsDialog = () => (
  <Dialog role="dialog" aria-labelledby="dialog-name" onSubmit={e => e.preventDefault()}>
    <DialogTitle>
      <DialogName id="dialog-name">함수 인수</DialogName>
      <DialogTool type="button" aria-label="도움말">?</DialogTool>
      <DialogTool type="button" aria-label="닫기">
        <Ico w={11} h={11}><path d="M.5 .5l10 10M10.500 .5l-10 10" strokeWidth="1.200" /></Ico>
      </DialogTool>
    </DialogTitle>
    <DialogBody>
      <ArgGroup>
        <ArgLegend>SUMIFS</ArgLegend>
        <Argument name="Sum_range" active />
        <Argument name="Criteria_range1" />
      </ArgGroup>
      <ResultRow>=</ResultRow>
      <Line>주어진 조건에 따라 지정되는 셀을 더합니다.</Line>
      <ArgHelp>
        <dt>Sum_range:</dt>
        <dd>은(는) 합을 구할 실제 셀입니다.</dd>
      </ArgHelp>
      <Rule />
      <Line>수식 결과=</Line>
      <DialogFooter>
        <HelpLink href="#help">도움말(H)</HelpLink>
        <DialogButton type="submit" $primary>확인</DialogButton>
        <DialogButton type="button">취소</DialogButton>
      </DialogFooter>
    </DialogBody>
  </Dialog>
);

export default function App() {
  return (
    <>
      <GlobalStyle />
      <Window>
        <TitleArea />
        <MenuRow />
        <RibbonArea />
        <FormulaArea />
        <Worksheet />
        <Bottom />
        <ArgumentsDialog />
      </Window>
    </>
  );
}
